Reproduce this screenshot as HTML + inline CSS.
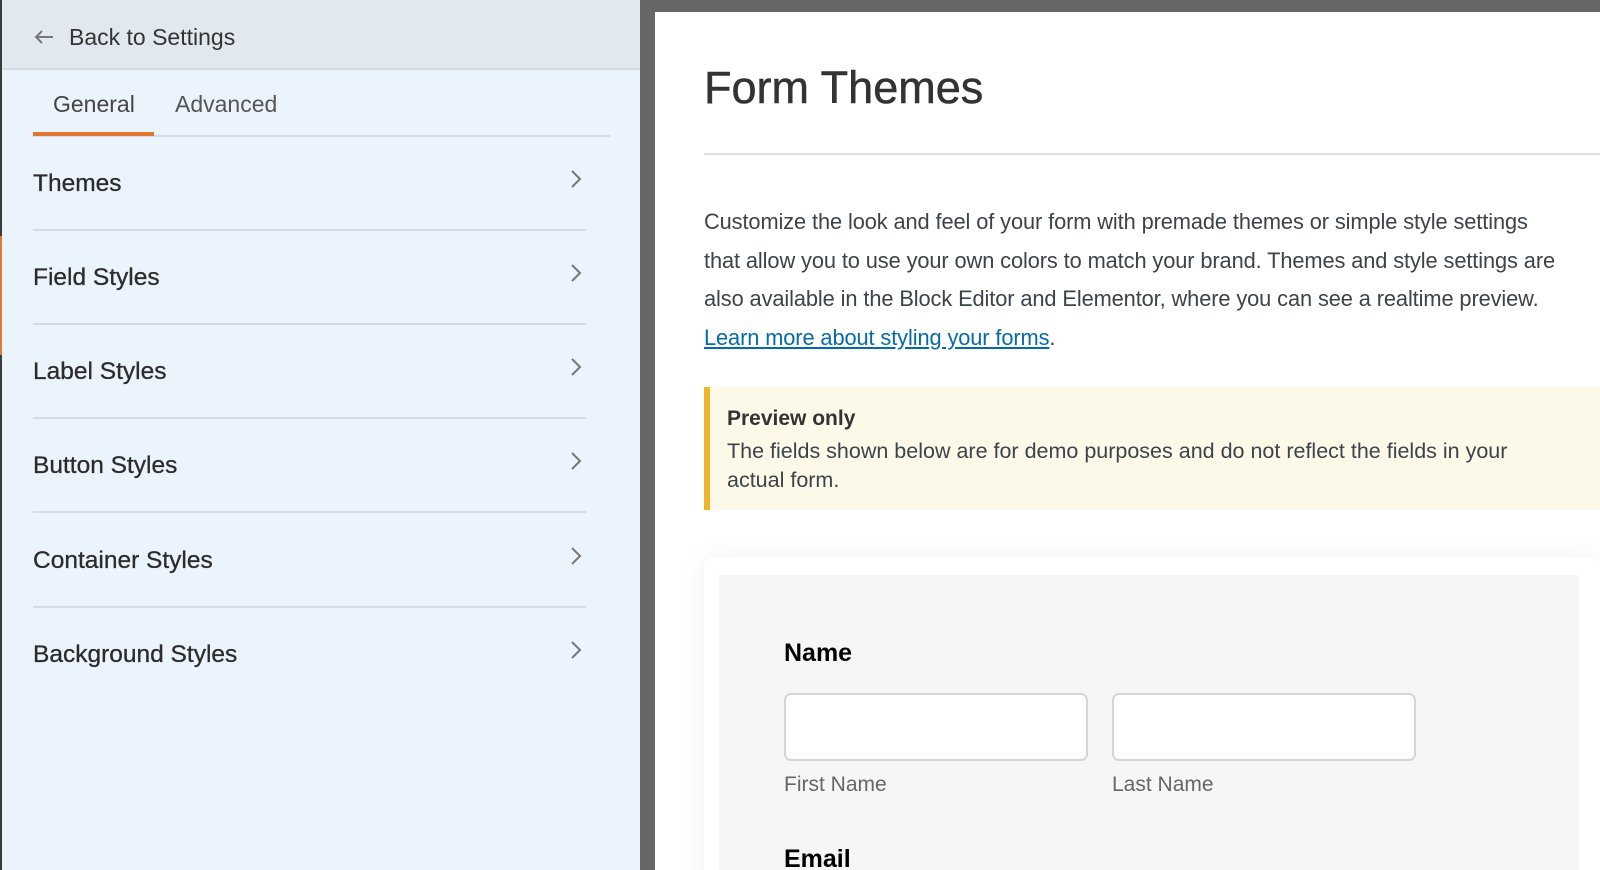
<!DOCTYPE html>
<html style="overflow:hidden;height:870px"><head><meta charset="utf-8"><style>
*{margin:0;padding:0;box-sizing:border-box}
body{width:1600px;height:870px;overflow:hidden;background:#666;font-family:"Liberation Sans",sans-serif;position:relative}
.side{position:absolute;left:0;top:0;width:640px;height:870px;background:#ebf3fc;border-left:2px solid #3c3c3c}
.orange{position:absolute;left:-2px;top:236px;width:2px;height:119px;background:#e27730}
.hdr{height:70px;background:#e2e8f0;border-bottom:2px solid #d3dbe4;position:relative}
.hdr span{position:absolute;left:67px;top:24px;font-size:23px;color:#333}
.hdr svg{position:absolute;left:31px;top:28px}
.tabs{position:absolute;left:31px;top:70px;width:577px;height:67px;border-bottom:2px solid #d3dbe4}
.tab{position:absolute;top:21px;font-size:23px;color:#444}
.ul{position:absolute;left:0;top:62px;width:121px;height:4px;background:#e27730}
.item{position:absolute;left:31px;width:553px;height:94px;border-bottom:2px solid #d3dbe4}
.item span{position:absolute;left:0;top:33px;font-size:24.5px;color:#2c2c2c;-webkit-text-stroke:0.3px #2c2c2c}
.item svg{position:absolute;right:4px;top:32px}
.main{position:absolute;left:655px;top:12px;width:945px;height:858px;background:#fff;overflow:hidden}
h1{position:absolute;left:49px;top:50px;font-size:45px;font-weight:normal;color:#333;-webkit-text-stroke:0.5px #333}
.hr{position:absolute;left:49px;top:141px;width:896px;height:2px;background:#e0e0e0}
.p{position:absolute;left:49px;top:191px;font-size:21.8px;line-height:38.5px;color:#3c434a;white-space:nowrap;letter-spacing:-0.1px}
.p a{color:#056aab}
.note{position:absolute;left:49px;top:375px;width:896px;height:123px;background:#fcf9e8;border-left:6px solid #f0b52a}
.note b{position:absolute;left:17px;top:20px;font-size:21px;font-weight:bold;color:#333}
.note div{position:absolute;left:17px;top:50px;font-size:21.5px;line-height:29px;color:#3c434a;white-space:nowrap}
.card{position:absolute;left:49px;top:545px;width:896px;height:330px;box-shadow:0 0 30px rgba(0,0,0,0.06);border-radius:8px}
.inner{position:absolute;left:64px;top:563px;width:860px;height:320px;background:#f6f6f6}
.lbl{position:absolute;font-size:25px;font-weight:bold;color:#000}
.in{position:absolute;top:681px;width:304px;height:68px;background:#fff;border:2px solid #d6d6d6;border-radius:7px}
.sub{position:absolute;top:761px;font-size:21px;color:#666}
</style></head><body>
<div class="side">
 <div class="orange"></div>
 <div class="hdr"><svg width="22" height="18" viewBox="0 0 22 18"><path d="M20 9H3M9 3L3 9l6 6" stroke="#777" stroke-width="2" fill="none"/></svg><span>Back to Settings</span></div>
 <div class="tabs"><span class="tab" style="left:20px">General</span><span class="tab" style="left:142px;color:#555">Advanced</span><div class="ul"></div></div>
 <div class="item" style="top:137px"><span>Themes</span><svg width="12" height="20"><path d="M2 2l8 8-8 8" stroke="#777" stroke-width="2" fill="none"/></svg></div>
 <div class="item" style="top:231px"><span>Field Styles</span><svg width="12" height="20"><path d="M2 2l8 8-8 8" stroke="#777" stroke-width="2" fill="none"/></svg></div>
 <div class="item" style="top:325px"><span>Label Styles</span><svg width="12" height="20"><path d="M2 2l8 8-8 8" stroke="#777" stroke-width="2" fill="none"/></svg></div>
 <div class="item" style="top:419px"><span>Button Styles</span><svg width="12" height="20"><path d="M2 2l8 8-8 8" stroke="#777" stroke-width="2" fill="none"/></svg></div>
 <div class="item" style="top:514px"><span>Container Styles</span><svg width="12" height="20"><path d="M2 2l8 8-8 8" stroke="#777" stroke-width="2" fill="none"/></svg></div>
 <div class="item" style="top:608px;border:none"><span>Background Styles</span><svg width="12" height="20"><path d="M2 2l8 8-8 8" stroke="#777" stroke-width="2" fill="none"/></svg></div>
</div>
<div class="main">
 <h1>Form Themes</h1>
 <div class="hr"></div>
 <div class="p">Customize the look and feel of your form with premade themes or simple style settings<br>that allow you to use your own colors to match your brand. Themes and style settings are<br>also available in the Block Editor and Elementor, where you can see a realtime preview.<br><a href="#">Learn more about styling your forms</a>.</div>
 <div class="note"><b>Preview only</b><div>The fields shown below are for demo purposes and do not reflect the fields in your<br>actual form.</div></div>
 <div class="card"></div>
 <div class="inner"></div>
 <div class="lbl" style="left:129px;top:627px">Name</div>
 <div class="in" style="left:129px"></div>
 <div class="in" style="left:457px"></div>
 <div class="sub" style="left:129px">First Name</div>
 <div class="sub" style="left:457px">Last Name</div>
 <div class="lbl" style="left:129px;top:833px">Email</div>
</div>
</body></html>
